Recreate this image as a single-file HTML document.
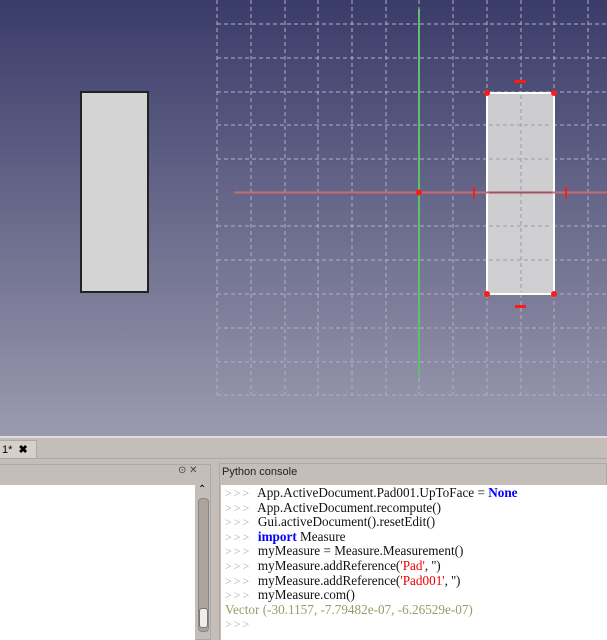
<!DOCTYPE html>
<html><head><style>
body{margin:0;width:607px;height:640px;overflow:hidden;background:#c4bdb8;position:relative;font-family:"Liberation Sans",sans-serif}
.abs{position:absolute}
.con{font-family:"Liberation Serif",serif;font-size:13.2px;line-height:14.6px;color:#111;white-space:pre}
.p{color:#aaa;letter-spacing:2px;font-size:12px}
</style></head><body>
<svg class="abs" style="left:0;top:0" width="607" height="436">
<defs><linearGradient id="g" x1="0" y1="0" x2="0" y2="1">
<stop offset="0" stop-color="#3a3b69"/><stop offset="1" stop-color="#9a9aaf"/></linearGradient></defs>
<rect width="607" height="436" fill="url(#g)"/>
<g stroke="#b0b0c2" stroke-width="1" stroke-dasharray="4,3" fill="none">
<path d="M217 0V395M251 0V395M285 0V395M318 0V395M352 0V395M386 0V395M453 0V395M487 0V395M521 0V395M554 0V395M588 0V395"/>
<path d="M217 24H607M217 58H607M217 92H607M217 125H607M217 159H607M217 226H607M217 260H607M217 294H607M217 328H607M217 362H607M217 395H607"/>
</g>
<path d="M419 0V395" stroke="#b0b0c2" stroke-dasharray="4,3"/>
<rect x="81" y="92" width="67" height="200" fill="#d4d4d4" stroke="#222" stroke-width="2"/>
<rect x="487" y="93" width="67" height="201" fill="#d6d6d6" fill-opacity="0.93" stroke="#fff" stroke-width="2"/>
<g stroke="#9a9ab0" stroke-dasharray="4,3"><path d="M521 95V292M489 125H552M489 159H552M489 226H552M489 260H552"/></g>
<path d="M234 192.5H607" stroke="#c86a74" stroke-width="2"/>
<path d="M489 192.5H552" stroke="#a85060" stroke-width="2"/>
<path d="M419 9V378" stroke="#5fbf6f" stroke-width="2"/>
<g fill="#ff1a1a"><circle cx="419" cy="192.5" r="3"/><circle cx="487" cy="93" r="3"/><circle cx="554" cy="93" r="3"/><circle cx="487" cy="294" r="3"/><circle cx="554" cy="294" r="3"/>
<rect x="514" y="80" width="12" height="3"/><rect x="515" y="305" width="11" height="3"/><rect x="473" y="187" width="2" height="11"/><rect x="565" y="187" width="2" height="11"/></g>
</svg>
<div class="abs" style="left:0;top:436px;width:607px;height:2px;background:#e0dcd8"></div>
<div class="abs" style="left:0;top:440px;width:37px;height:18px;background:#d6d0cb;border:1px solid #aaa;border-left:none;border-bottom:none;font-size:11px;line-height:18px;padding-left:2px;box-sizing:border-box">1* &nbsp;<b>✖</b></div>
<div class="abs" style="left:0;top:458px;width:607px;height:1px;background:#aaa"></div>
<div class="abs" style="left:0;top:464px;width:211px;height:176px;border:1px solid #aaa;border-left:none;box-sizing:border-box"></div>
<div class="abs" style="left:178px;top:465px;font-size:10px;color:#444">⊙ ✕</div>
<div class="abs" style="left:0;top:485px;width:195px;height:155px;background:#fff"></div>
<div class="abs" style="left:198px;top:498px;width:11px;height:134px;background:#aaa39e;border:1px solid #888;border-radius:4px;box-sizing:border-box"></div>
<div class="abs" style="left:199px;top:608px;width:9px;height:20px;background:#f0eeec;border:1px solid #777;border-radius:3px;box-sizing:border-box"></div>
<div class="abs" style="left:198px;top:484px;font-size:10px">⌃</div>
<div class="abs" style="left:219px;top:463px;width:388px;height:177px;border:1px solid #aaa;box-sizing:border-box"></div>
<div class="abs" style="left:222px;top:466px;font-size:11px;color:#222">Python console</div>
<div class="abs" style="left:221px;top:485px;width:386px;height:155px;background:#fff"></div>
<div class="abs con" style="left:225px;top:486px"><span class="p">&gt;&gt;&gt;</span>  App.ActiveDocument.Pad001.UpToFace = <b style="color:#0000ff">None</b>
<span class="p">&gt;&gt;&gt;</span>  App.ActiveDocument.recompute()
<span class="p">&gt;&gt;&gt;</span>  Gui.activeDocument().resetEdit()
<span class="p">&gt;&gt;&gt;</span>  <b style="color:#0000ff">import</b> Measure
<span class="p">&gt;&gt;&gt;</span>  myMeasure = Measure.Measurement()
<span class="p">&gt;&gt;&gt;</span>  myMeasure.addReference(<span style="color:#e00">'Pad'</span>, '')
<span class="p">&gt;&gt;&gt;</span>  myMeasure.addReference(<span style="color:#e00">'Pad001'</span>, '')
<span class="p">&gt;&gt;&gt;</span>  myMeasure.com()
<span style="color:#9a9a6a">Vector (-30.1157, -7.79482e-07, -6.26529e-07)</span>
<span class="p">&gt;&gt;&gt;</span></div>
</body></html>
